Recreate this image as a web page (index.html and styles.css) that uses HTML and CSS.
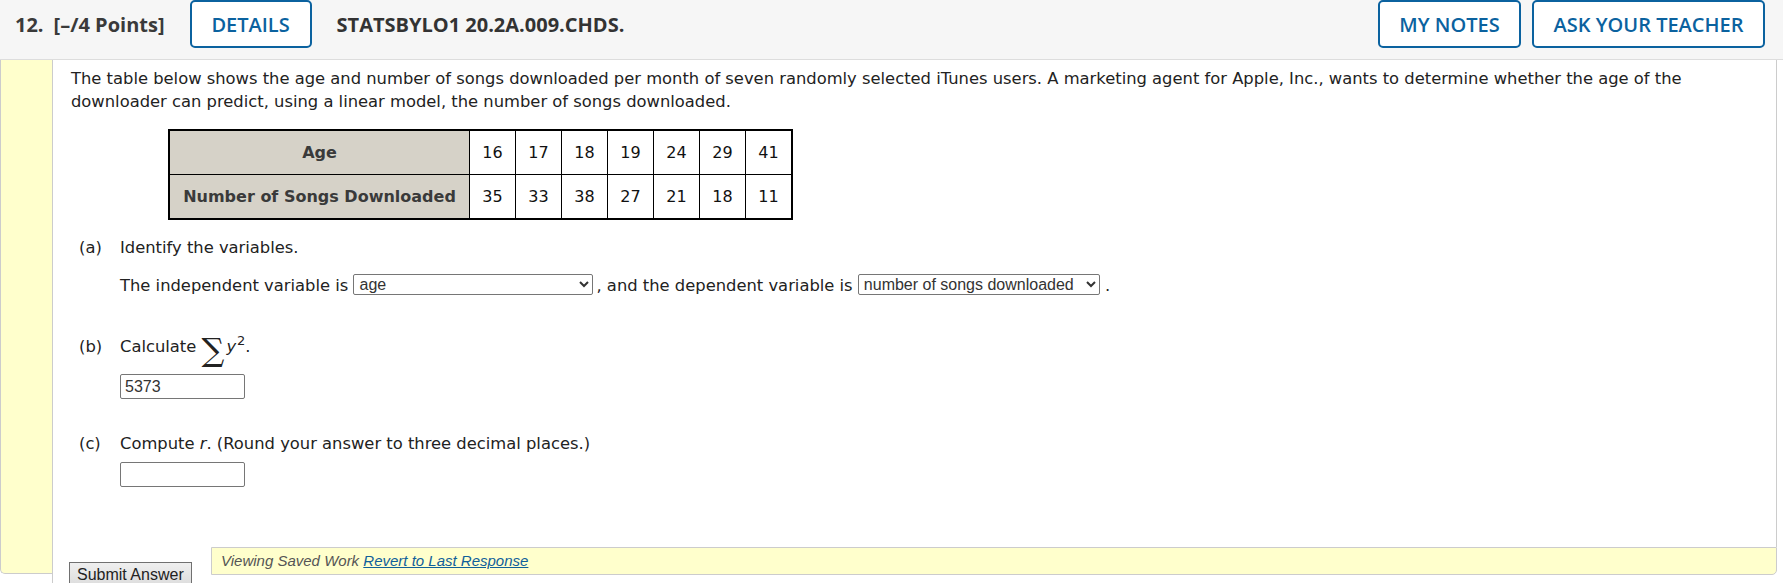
FILE: index.html
```html
<!DOCTYPE html>
<html>
<head>
<meta charset="utf-8">
<link rel="stylesheet" href="styles.css">
</head>
<body>
<div class="header">
  <div class="qnum">12.<span class="pts">[–/4 Points]</span></div>
  <button class="hbtn details">DETAILS</button>
  <div class="qcode">STATSBYLO1 20.2A.009.CHDS.</div>
  <button class="hbtn notes">MY NOTES</button>
  <button class="hbtn ask">ASK YOUR TEACHER</button>
</div>
<div class="main">
  <div class="strip"></div>
  <div class="content">
    <div class="question">
      <p class="intro">The table below shows the age and number of songs downloaded per month of seven randomly selected iTunes users. A marketing agent for Apple, Inc., wants to determine whether the age of the downloader can predict, using a linear model, the number of songs downloaded.</p>
      <table class="data">
        <tr><th>Age</th><td>16</td><td>17</td><td>18</td><td>19</td><td>24</td><td>29</td><td>41</td></tr>
        <tr><th>Number of Songs Downloaded</th><td>35</td><td>33</td><td>38</td><td>27</td><td>21</td><td>18</td><td>11</td></tr>
      </table>
      <div class="part part-a">
        <div class="plabel">(a)</div>
        <div class="pbody">
          <div class="line">Identify the variables.</div>
          <div class="line line2">The independent variable is <select class="sel sel1"><option>age</option></select>, and the dependent variable is <select class="sel sel2"><option>number of songs downloaded</option></select> .</div>
        </div>
      </div>
      <div class="part part-b">
        <div class="plabel">(b)</div>
        <div class="pbody">
          <div class="line">Calculate <span class="sigma">∑</span><span class="var">y</span><sup class="sq">2</sup>.</div>
          <input class="ans ans-b" type="text" value="5373">
        </div>
      </div>
      <div class="part part-c">
        <div class="plabel">(c)</div>
        <div class="pbody">
          <div class="line">Compute <span class="var">r</span>. (Round your answer to three decimal places.)</div>
          <input class="ans ans-c" type="text" value="">
        </div>
      </div>
    </div>
    <div class="footer">
      <div class="submit-cell"><button class="submit">Submit Answer</button></div>
      <div class="savebar"><span class="saved">Viewing Saved Work</span> <a class="revert" href="#">Revert to Last Response</a></div>
    </div>
  </div>
</div>
</body>
</html>
```

FILE: styles.css
```css
html, body {
  margin: 0;
  padding: 0;
  background: #ffffff;
  overflow: hidden;
}
body {
  width: 1783px;
  height: 583px;
  font-family: "DejaVu Sans", Verdana, sans-serif;
  font-size: 16.35px;
  color: #222;
}
.header {
  display: flex;
  align-items: center;
  height: 48px;
  padding: 0 18px 11px 15px;
  background: #f6f6f6;
  border-bottom: 1px solid #dddddd;
  font-family: "Open Sans", sans-serif;
  font-weight: 700;
  font-size: 20px;
}
.qnum {
  color: #3a3a3a;
  white-space: nowrap;
}
.pts {
  margin-left: 10px;
}
.hbtn {
  box-sizing: border-box;
  height: 48px;
  background: #ffffff;
  border: 2px solid #0b629f;
  border-radius: 5px;
  color: #0b629f;
  font-family: "Open Sans", sans-serif;
  font-weight: 600;
  font-size: 20px;
  padding: 0;
  text-align: center;
}
.details {
  width: 122px;
  margin-left: 25px;
}
.qcode {
  margin-left: 25px;
  color: #333333;
}
.notes {
  width: 143px;
  margin-left: auto;
}
.ask {
  width: 233px;
  margin-left: 11px;
}
.main {
  display: flex;
  width: 1777px;
  align-items: flex-start;
}
.strip {
  box-sizing: border-box;
  width: 52px;
  flex: none;
  height: 514px;
  background: #ffffcc;
  border-left: 1px solid #cccccc;
  border-bottom: 1px solid #cccccc;
  border-bottom-left-radius: 5px;
}
.content {
  flex: 1;
  border-left: 1px solid #cccccc;
  min-height: 540px;
}
.question {
  box-sizing: border-box;
  height: 487px;
  border-right: 1px solid #cccccc;
  padding: 7px 60px 0 18px;
}
.intro {
  margin: 0;
  line-height: 23px;
}
.data {
  border-collapse: collapse;
  table-layout: fixed;
  margin: 16px 0 0 97px;
  border: 2px solid #000;
}
.data th, .data td {
  border: 1px solid #000;
  height: 43px;
  padding: 0;
  text-align: center;
  font-size: 16px;
}
.data th {
  width: 299px;
  background: #d6d2c8;
  color: #3a3a3a;
  font-weight: bold;
}
.data td {
  width: 45px;
  color: #111;
}
.part {
  display: grid;
  grid-template-columns: 41px 1fr;
  padding-left: 8px;
  line-height: 23px;
}
.part-a { margin-top: 16px; }
.part-b { margin-top: 38px; }
.part-c { margin-top: 33px; }
.line2 {
  margin-top: 15px;
}
.sel {
  box-sizing: border-box;
  height: 21px;
  vertical-align: top;
  font-family: "Liberation Sans", Arial, sans-serif;
  font-size: 16px;
  color: #333;
  border: 1px solid #767676;
  border-radius: 2px;
  background: #fff;
  padding: 0 1px;
  margin: 0 3px 0 0;
}
.sel1 { width: 240px; }
.sel2 { width: 242px; margin-right: 0; }
.sigma {
  display: inline-block;
  height: 23px;
  line-height: 23px;
  font-family: "DejaVu Serif", serif;
  font-size: 32px;
  vertical-align: top;
  position: relative;
  top: 4px;
  margin-right: 2px;
  color: #222;
}
.var {
  font-style: italic;
}
.sq {
  font-size: 13px;
  line-height: 0;
  vertical-align: 7px;
  margin-left: 1px;
}
.ans {
  box-sizing: border-box;
  display: block;
  width: 125px;
  height: 25px;
  border: 1px solid #767676;
  border-radius: 2px;
  font-family: "Liberation Sans", Arial, sans-serif;
  font-size: 16px;
  color: #333;
  padding: 0 4px;
}
.ans-b { margin-top: 16px; }
.ans-c { margin-top: 7px; }
.footer {
  display: flex;
  align-items: flex-start;
}
.submit-cell {
  width: 158px;
  flex: none;
  padding: 15px 0 0 16px;
  box-sizing: border-box;
}
.submit {
  box-sizing: border-box;
  height: 25px;
  padding: 0 7px;
  border: 1px solid #707070;
  background: linear-gradient(#efefef, #dcdcdc);
  font-family: "Liberation Sans", Arial, sans-serif;
  font-size: 16px;
  color: #222;
  white-space: nowrap;
}
.savebar {
  flex: 1;
  box-sizing: border-box;
  height: 28px;
  background: #ffffcc;
  border: 1px solid #cccccc;
  border-bottom-right-radius: 5px;
  padding: 0 0 0 9px;
  line-height: 26px;
  font-family: "Liberation Sans", Arial, sans-serif;
  font-size: 15px;
  font-style: italic;
}
.saved {
  color: #555555;
}
.revert {
  color: #10609a;
  text-decoration: underline;
}
```
